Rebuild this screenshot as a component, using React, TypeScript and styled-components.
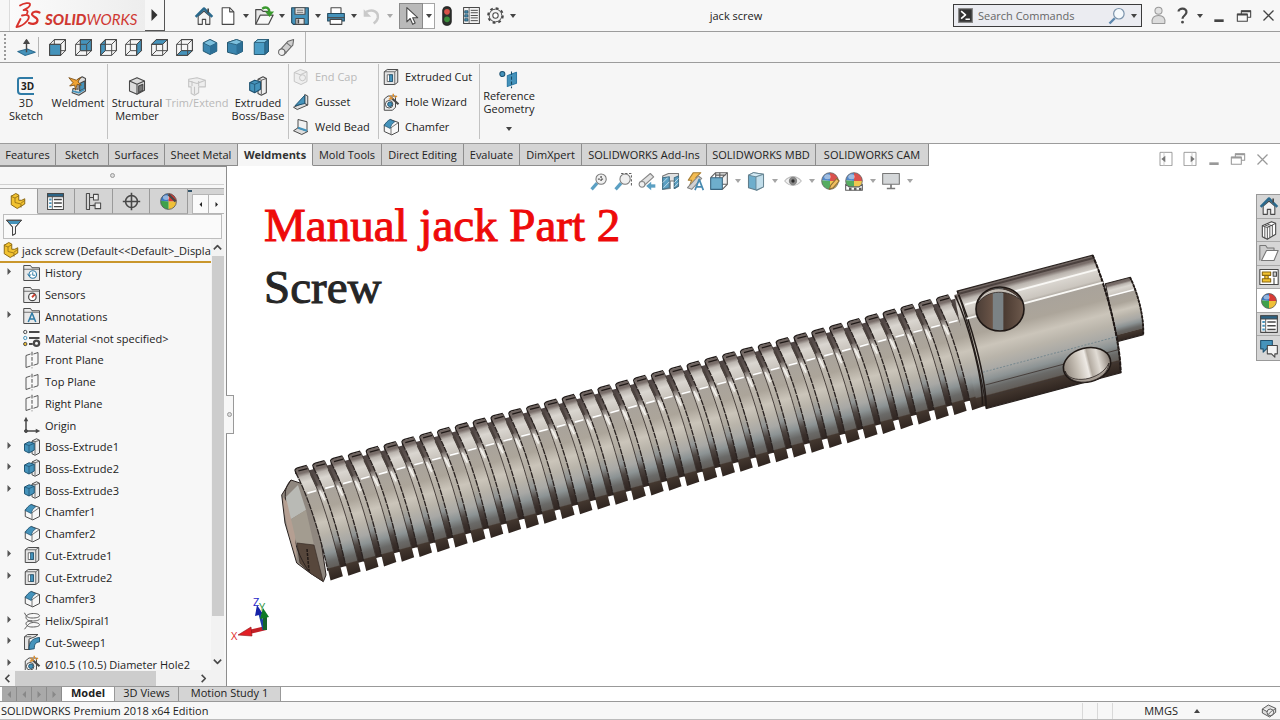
import React from "react";
import styled, { createGlobalStyle, css } from "styled-components";

const ui = `"Open Sans", "Noto Sans", sans-serif`;
const blue = "#4593bb";
const ink = "#484848";

const Global = createGlobalStyle`
  *, *::before, *::after { box-sizing: border-box; }
  html, body { margin: 0; padding: 0; }
  body { background: #fff; color: #222; font: 11px/13px ${ui}; overflow: hidden; }
  button, input { font: inherit; color: inherit; margin: 0; }
  button { border: 0; padding: 0; background: none; cursor: pointer; }
  ul { list-style: none; margin: 0; padding: 0; }
  svg { display: block; flex: none; }
`;

/* ---------- shell ---------- */

const Shell = styled.div`
  display: flex;
  flex-direction: column;
  height: 100vh;
  min-height: 560px;
`;

const TitleBar = styled.header`
  display: flex;
  align-items: center;
  height: 32px;
  background: #f7f7f7;
  border-bottom: 1px solid #9c9c9c;
`;

const Brand = styled.div`
  display: flex;
  align-items: center;
  width: 136px;
  height: 31px;
  margin-left: 9px;
  padding-left: 5px;
  border-left: 1px solid #dcdcdc;
  background: linear-gradient(90deg, #fbfbfb, #ededed);
  color: #cf3832;
`;

const Wordmark = styled.span`
  margin-top: 7px;
  padding-left: 4px;
  font: italic 400 15px/18px Lato, ${ui};
  b { font-weight: 900; }
`;

const BrandArrow = styled.button`
  display: flex;
  align-items: center;
  justify-content: center;
  width: 20px;
  height: 31px;
  border-right: 1px solid #555;
  border-bottom: 1px solid #555;
`;

const QuickTools = styled.div`
  display: flex;
  align-items: center;
  margin-left: 27px;
`;

const IconButton = styled.button<{ $w?: number; $h?: number; $pressed?: boolean }>`
  display: flex;
  flex: none;
  align-items: center;
  justify-content: center;
  width: ${(p) => p.$w ?? 24}px;
  height: ${(p) => p.$h ?? 24}px;
  ${(p) => p.$pressed && css`
    height: 26px;
    margin-left: 3px;
    background: #b9b9b9;
    border: 1px solid #8a8a8a;
  `}
`;

const MenuButton = styled.button<{ $boxed?: boolean; $w?: number }>`
  display: flex;
  flex: none;
  align-items: center;
  justify-content: center;
  width: ${(p) => p.$w ?? 12}px;
  height: 24px;
  ${(p) => p.$boxed && css`
    height: 26px;
    border: 1px solid #a5a5a5;
    border-left: 0;
    background: #fff;
  `}
`;

const DocTitle = styled.h1`
  flex: 1;
  margin: 0;
  text-align: center;
  font: 11px/13px ${ui};
`;

const SearchBox = styled.form`
  display: flex;
  align-items: center;
  width: 189px;
  height: 23px;
  padding: 0 4px;
  gap: 5px;
  border: 1px solid #3c3c3c;
  background: #ebecf1;
  input {
    flex: 1;
    min-width: 0;
    padding: 0;
    border: 0;
    outline: 0;
    background: none;
    &::placeholder { color: #666; opacity: 1; }
  }
`;

const WindowTools = styled.div`
  display: flex;
  align-items: center;
  margin-left: 4px;
`;

const ViewBar = styled.div`
  display: flex;
  align-items: center;
  height: 31px;
  background: #f6f6f6;
  border-bottom: 1px solid #9c9c9c;
`;

const Grip = styled.span`
  width: 1px;
  height: 26px;
  margin: 0 8px 0 4px;
  border-left: 2px dotted #9a9a9a;
`;

const Rule = styled.span<{ $h: number }>`
  flex: none;
  width: 1px;
  height: ${(p) => p.$h}px;
  background: #b5b5b5;
`;

const StatusRule = styled(Rule)`
  background: #d9d9d9;
`;

const ViewGrid = styled.div`
  display: grid;
  grid-template-columns: repeat(10, 1fr);
  justify-items: center;
  width: 254px;
  margin: 0 6px 0 6px;
`;

/* ---------- ribbon ---------- */

const Ribbon = styled.div`
  display: flex;
  height: 81px;
  padding: 1px 0 4px;
  background: #f6f6f6;
  border-bottom: 1px solid #9c9c9c;
`;

const RibbonGroup = styled.div<{ $pad?: string; $w?: number }>`
  display: flex;
  min-width: ${(p) => p.$w ?? 0}px;
  padding: ${(p) => p.$pad ?? "0 4px"};
  border-right: 1px solid #c2c2c2;
  &:last-child { border-right: 0; }
`;

const BigButton = styled.button<{ $w: number; $top?: number; $off?: boolean }>`
  display: flex;
  flex-direction: column;
  align-items: center;
  width: ${(p) => p.$w}px;
  padding-top: ${(p) => p.$top ?? 12}px;
  color: ${(p) => (p.$off ? "#b9b9b9" : "#222")};
  white-space: nowrap;
`;

const MoreMark = styled.span`
  margin-top: 12px;
`;

const SmallColumn = styled.div`
  display: grid;
  grid-template-rows: repeat(3, 1fr);
  width: 100%;
`;

const SmallButton = styled.button<{ $off?: boolean }>`
  display: flex;
  align-items: center;
  gap: 5px;
  color: ${(p) => (p.$off ? "#b9b9b9" : "#222")};
  white-space: nowrap;
`;

const CommandTabs = styled.nav`
  display: flex;
  align-items: flex-start;
  height: 22px;
`;

const CommandTab = styled.button<{ $on?: boolean; $w: number }>`
  min-width: ${(p) => p.$w}px;
  height: 22px;
  border-right: 1px solid #8d8d8d;
  border-bottom: 1px solid #8d8d8d;
  background: #d4d4d4;
  white-space: nowrap;
  ${(p) => p.$on && css`
    background: #f6f6f6;
    border-bottom-color: #f6f6f6;
    font-weight: 700;
    color: #333;
  `}
`;

const DocTools = styled.div`
  display: flex;
  margin: 3px 6px 0 auto;
`;

/* ---------- work area ---------- */

const Work = styled.main`
  display: flex;
  flex: 1;
  min-height: 0;
`;

const Panel = styled.aside`
  display: flex;
  flex: none;
  flex-direction: column;
  width: 227px;
  background: #f7f7f7;
  border-top: 1px solid #8d8d8d;
  border-right: 1px solid #8d8d8d;
`;

const PanelHandle = styled.div`
  display: flex;
  align-items: center;
  justify-content: center;
  height: 18px;
  margin-right: 2px;
  border-bottom: 1px solid #d0d0d0;
`;

const Dot = styled.span`
  width: 5px;
  height: 5px;
  border: 1px solid #999;
  border-radius: 50%;
  background: #ddd;
`;

const PanelTabs = styled.div`
  display: flex;
  height: 26px;
  margin: 3px 2px 0 0;
  border-top: 1px solid #aaa;
  background: #d4d4d4;
`;

const PanelTab = styled.button<{ $on?: boolean }>`
  display: flex;
  flex: 1;
  align-items: center;
  justify-content: center;
  border-right: 1px solid #9a9a9a;
  border-bottom: 1px solid ${(p) => (p.$on ? "#f7f7f7" : "#aaa")};
  background: ${(p) => (p.$on ? "#f7f7f7" : "#d4d4d4")};
`;

const PanelScroll = styled.button`
  display: flex;
  align-items: center;
  justify-content: center;
  width: 16px;
  height: 20px;
  margin-top: 5px;
  border: 1px solid #b5b5b5;
  border-right: 0;
  background: #fafafa;
`;

const TabEdge = styled.span`
  width: 4px;
  height: 3px;
  border-bottom: 2px solid #33556b;
`;

const FilterBox = styled.label`
  display: flex;
  align-items: center;
  height: 25px;
  margin: 0 4px 0 3px;
  padding-left: 1px;
  border: 1px solid #bdbdbd;
  background: #fafafa;
  input {
    flex: 1;
    min-width: 0;
    border: 0;
    outline: 0;
    background: none;
  }
`;

const TreeArea = styled.div`
  display: flex;
  flex: 1;
  min-height: 0;
  margin-right: 2px;
`;

const Tree = styled.div`
  display: flex;
  flex: 1;
  flex-direction: column;
  min-width: 0;
  overflow: hidden;
`;

const TreeRoot = styled.div`
  display: flex;
  flex: none;
  align-items: center;
  height: 24px;
  gap: 2px;
  padding-left: 2px;
  border-bottom: 2px solid #c9962c;
  white-space: nowrap;
`;

const TreeList = styled.ul`
  display: grid;
  flex: 1;
  grid-auto-rows: 1fr;
  && { margin: -1px 0 -5px; }
`;

const TreeItem = styled.li`
  display: flex;
  align-items: center;
  min-height: 20px;
  white-space: nowrap;
`;

const Twisty = styled.button`
  display: flex;
  align-items: center;
  width: 23px;
  height: 12px;
  padding: 0 0 3px 7px;
`;

const Leaf = styled.span`
  width: 23px;
`;

const ItemName = styled.span`
  margin-left: 4px;
`;

const VScroll = styled.div`
  display: flex;
  flex-direction: column;
  align-items: center;
  width: 13px;
  background: #f2f2f2;
`;

const VThumb = styled.div`
  flex: 358;
  width: 12px;
  background: #cdcdcd;
`;

const VTrack = styled.div`
  flex: 37;
`;

const HScroll = styled.div`
  display: flex;
  flex: none;
  align-items: center;
  height: 16px;
  background: #f2f2f2;
`;

const HThumb = styled.div`
  width: 141px;
  height: 15px;
  margin-right: 40px;
  background: #cdcdcd;
`;

const Viewport = styled.section`
  position: relative;
  flex: 1;
  min-width: 0;
  background: #fff;
`;

const Scene = styled.svg`
  position: absolute;
  inset: 0;
  width: 100%;
  height: 100%;
`;

const HeadsUp = styled.div`
  position: relative;
  display: flex;
  align-items: center;
  justify-content: center;
  height: 28px;
  padding: 2px 4px 0 0;
  opacity: 0.88;
`;

const Caption = styled.div`
  position: relative;
  padding: 0 0 0 37px;
`;

const CaptionLine = styled.p<{ $color: string }>`
  margin: 0;
  font: 47px/62px "Liberation Serif", serif;
  color: ${(p) => p.$color};
  -webkit-text-stroke: 1px ${(p) => p.$color};
`;

const Flyout = styled.button`
  position: absolute;
  left: -1px;
  top: 229px;
  display: flex;
  align-items: center;
  justify-content: center;
  width: 8px;
  height: 39px;
  border: 1px solid #999;
  border-left: 0;
  background: #f7f7f7;
`;

const TaskPane = styled.nav`
  position: absolute;
  right: 0;
  top: 28px;
  display: grid;
  grid-template-rows: repeat(7, 1fr);
  width: 24px;
  height: 167px;
  border: 1px solid #999;
  border-right: 0;
`;

const TaskButton = styled.button<{ $on?: boolean }>`
  display: flex;
  align-items: center;
  justify-content: center;
  background: ${(p) => (p.$on ? "#fff" : "#d6d6d6")};
  border-bottom: 1px solid #a8a8a8;
  &:last-child { border-bottom: 0; }
`;

/* ---------- bottom ---------- */

const SheetTabs = styled.nav`
  display: flex;
  flex: none;
  height: 16px;
  padding-left: 2px;
  border-top: 1px solid #999;
  border-bottom: 1px solid #999;
`;

const SheetStep = styled.button`
  display: flex;
  align-items: center;
  justify-content: center;
  width: 15px;
  background: #a9a9a9;
  border-right: 1px solid #8c8c8c;
`;

const SheetTab = styled.button<{ $on?: boolean; $w: number }>`
  min-width: ${(p) => p.$w}px;
  padding-bottom: 2px;
  border-right: 1px solid #999;
  background: ${(p) => (p.$on ? "#fff" : "#d4d4d4")};
  font-weight: ${(p) => (p.$on ? 700 : 400)};
  line-height: 12px;
  white-space: nowrap;
`;

const StatusBar = styled.footer`
  display: flex;
  flex: none;
  align-items: center;
  height: 18px;
  padding: 0 3px 0 1px;
  background: #f7f7f7;
  border-bottom: 1px solid #bbb;
`;

const StatusCells = styled.div`
  display: flex;
  align-items: center;
  gap: 14px;
  margin-left: auto;
`;

const Units = styled.button`
  display: flex;
  align-items: center;
  gap: 16px;
  margin: 0 47px 0 17px;
`;

/* ---------- icons ---------- */

const Icon = ({ s = 18, children }: { s?: number; children: React.ReactNode }) => (
  <svg width={s} height={s} viewBox="0 0 24 24" fill="none" stroke={ink} strokeWidth="1.3" strokeLinejoin="round" aria-hidden="true">
    {children}
  </svg>
);

const Down = ({ c = "#444" }: { c?: string }) => (
  <svg width="6" height="4" viewBox="0 0 6 4" aria-hidden="true"><path d="M0 0h6L3 4z" fill={c} /></svg>
);
const Side = ({ c = "#555", flip, s = 7 }: { c?: string; flip?: boolean; s?: number }) => (
  <svg width={s / 2 + 1} height={s} viewBox="0 0 4 8" aria-hidden="true"><path d={flip ? "M4 0v8L0 4z" : "M0 0v8l4-4z"} fill={c} /></svg>
);

const Logo3DS = () => (
  <svg width="26" height="29" viewBox="0 0 26 29" fill="none" stroke="#d8322c" strokeLinecap="round" strokeLinejoin="round" aria-hidden="true">
    <path d="M5 4.500C8 2.500 16 .5 15 4c-.7 2.500-4 4-6.500 5 4-.7 5 1 3.500 3.500" strokeWidth="1.800" />
    <path d="M7 14.500c7-2 8.500 1 5 5.500-2.500 3-6.500 5.500-10.500 6L5.500 18" strokeWidth="1.900" />
    <path d="M24.500 11.500c-3-1.500-7-1-7.500 1.500-.4 3 6 3 5.500 6.500-.5 3.500-5 4-8.500 2.500" strokeWidth="2.200" />
  </svg>
);

const Home = () => (
  <Icon s={20}>
    <path d="M5 12v10h5v-6h4v6h5V12L12 6z" fill="#f3f3f3" />
    <path d="M2 13 12 3l10 10" stroke="#2b6a8d" strokeWidth="3" />
    <path d="M17 3v5" strokeWidth="2" />
  </Icon>
);
const NewDoc = () => <Icon s={20}><path d="M5 2h9l5 5v15H5z" fill="#fff" /><path d="M14 2v5h5" /></Icon>;
const OpenDoc = () => (
  <Icon s={22}>
    <path d="M3 21V5h6l2 2h6v3" fill="#e8e8e8" /><path d="M3 21 8 11h14l-5 10z" fill="#f8f8f8" />
    <path d="M10 4c5-3 8 0 8 4" stroke="#3a9a2e" strokeWidth="2.600" /><path d="M13 7h10l-5 6z" fill="#3a9a2e" stroke="none" />
  </Icon>
);
const Save = () => (
  <Icon s={20}>
    <path d="M2 2h20v20H4l-2-2z" fill={blue} stroke="#23495e" /><path d="M6 2h12v8H6z" fill="#f4f4f4" /><path d="M8 5h8M8 7.500h8" strokeWidth="1" />
    <path d="M7 15h10v7H7z" fill="#e5e5e5" /><path d="M10 16v5" strokeWidth="2" />
  </Icon>
);
const Print = () => (
  <Icon s={20}>
    <path d="M6 9V2h12v7" fill="#fff" /><path d="M2 9h20v9H2z" fill={blue} stroke="#23495e" /><path d="M2 14h20" /><path d="M5 16h14v6H5z" fill="#fff" />
  </Icon>
);
const Undo = () => <Icon s={20}><path d="M5 7c8-4 15 0 14 7-.5 3-2 5-5 7" stroke="#c9c9c9" strokeWidth="3" /><path d="M2 4v9h9z" fill="#c9c9c9" stroke="none" /></Icon>;
const Cursor = () => <Icon s={20}><path d="M7 2v17l4-4 3 7 3-1.500L14 14h6z" fill="#fff" /></Icon>;
const Light = () => (
  <Icon s={20}>
    <rect x="7" y="1" width="10" height="22" rx="4.500" fill="#2d322d" stroke="#222" /><circle cx="12" cy="7" r="3.400" fill="#d9534a" stroke="none" /><circle cx="12" cy="16" r="3.400" fill="#3b8f3b" stroke="none" />
  </Icon>
);
const Props = ({ s = 19 }: { s?: number }) => (
  <Icon s={s}>
    <path d="M2 2h20v20H2z" fill="#fff" /><path d="M2 2h20v4H2z" fill="#2b6486" /><path d="M8 6v16" strokeWidth="1" />
    <path d="M4 9.500h3M4 14h3M4 18.500h3" stroke={blue} strokeWidth="2.400" /><path d="M10 9.500h10M10 14h10M10 18.500h10" strokeWidth="1.800" />
  </Icon>
);
const Options = () => (
  <Icon s={19}>
    <path d="M2 2h20v20H2z" fill="#f3f3f3" /><path d="M9 2v20" strokeWidth="1" />
    <path d="M3.500 6h4v3h-4zM3.500 11h4v3h-4zM3.500 16h4v3h-4z" fill={blue} stroke="#23495e" strokeWidth="1" /><path d="M11 5.500h9M11 8.500h9M11 12h9M11 15h9M11 18.500h9" strokeWidth="1.200" />
  </Icon>
);
const Gear = () => (
  <Icon s={19}>
    <circle cx="12" cy="12" r="9.300" strokeWidth="2.400" strokeDasharray="3.600 3.700" />
    <circle cx="12" cy="12" r="8" fill="#f3f3f3" strokeWidth="1.200" />
    <circle cx="12" cy="12" r="3.400" fill="#fff" strokeWidth="1.300" />
  </Icon>
);
const Terminal = () => <Icon s={15}><path d="M1 1h22v22H1z" fill="#333" stroke="#888" strokeWidth="2" /><path d="m5 5 7 6-7 6M12 18h7" stroke="#fff" strokeWidth="2.600" /></Icon>;
const Lens = () => <Icon s={18}><path d="m2 22 7-7" stroke="#5b86ad" strokeWidth="3.200" /><circle cx="14.500" cy="9" r="7" fill="#f5f9fc" stroke="#7b93ab" strokeWidth="1.600" /></Icon>;
const User = () => <Icon s={19}><circle cx="12" cy="6" r="4.500" fill="#e2e2e2" stroke="#999" /><path d="M4 22c-1-7 2-10 8-10s9 3 8 10z" fill="#dcdcdc" stroke="#999" /></Icon>;
const Help = () => <Icon s={19}><path d="M7 7C7 2 17.500 2 17 8c0 4-5 4-5 8" strokeWidth="2.800" /><circle cx="12" cy="20.500" r="1.100" fill={ink} /></Icon>;
const Minimize = ({ c = "#444", s = 16 }) => <Icon s={s}><path d="M5 19h14" stroke={c} strokeWidth="4" /></Icon>;
const Restore = ({ c = "#444", s = 16 }) => <Icon s={s}><path d="M8 9V4h14v10h-5" stroke={c} strokeWidth="1.600" /><path d="M2 9h15v11H2z" stroke={c} strokeWidth="1.600" /><path d="M8 5h14M2 10h15" stroke={c} strokeWidth="2.400" /></Icon>;
const Close = ({ c = "#444", s = 15 }) => <Icon s={s}><path d="m4 4 16 16M20 4 4 20" stroke={c} strokeWidth="2" /></Icon>;
const PaneArrow = ({ flip }: { flip?: boolean }) => (
  <Icon s={16}><path d="M3 2h18v20H3z" stroke="#8f8f8f" /><path d={flip ? "M15 2v20" : "M9 2v20"} stroke="#c4c4c4" /><path d={flip ? "M13 7v10l6-5z" : "M11 7v10l-6-5z"} fill="#777" stroke="none" /></Icon>
);

const Normal = () => <Icon s={19}><path d="m1 17 12-3 10 4-13 4z" fill={blue} stroke="#2d6d91" /><path d="M12 18V3" strokeWidth="1.800" /><path d="M8.500 7 12 2l3.500 5z" fill={ink} /></Icon>;
const faces: Record<string, string> = {
  front: "M2 8h14v14H2z", back: "M8 2h14v14H8z", left: "M2 8l6-6v14l-6 6z",
  right: "M16 8l6-6v14l-6 6z", top: "M2 8l6-6h14l-6 6z", bottom: "M2 22l6-6h14l-6 6z",
};
const WireCube = ({ face }: { face: string }) => (
  <Icon s={19}>
    <path d="M8 2h14v14H8zM2 22l6-6" strokeWidth="1.200" />
    <path d={faces[face]} fill={blue} stroke="none" />
    <path d="M2 8h14v14H2zM8 2h14v14M2 8l6-6M16 8l6-6M16 22l6-6" strokeWidth="1.200" />
    <path d={faces[face]} strokeWidth="1.200" />
  </Icon>
);
const IsoCube = () => <Icon s={18}><path d="M12 2 3 6.500v11L12 22l9-4.500v-11z" fill="#3b86af" stroke="#24566f" /><path d="m3 6.500 9 4.500 9-4.500L12 2z" fill="#7cc0de" stroke="#24566f" strokeWidth="1" /><path d="M12 11v11l9-4.500v-11z" fill="#2d7097" stroke="none" /></Icon>;
const TrimetricCube = () => <Icon s={18}><path d="M2 6 14 2l8 3v13l-8 4-12-3z" fill="#3b86af" stroke="#24566f" /><path d="m2 6 12 3 8-4-8-3z" fill="#7cc0de" stroke="#24566f" strokeWidth="1" /><path d="M14 9v13l8-4V5z" fill="#2d7097" stroke="none" /></Icon>;
const DimetricCube = () => <Icon s={18}><path d="M3 6 8 2h14v16l-5 4H3z" fill="#4a9cc5" stroke="#24566f" /><path d="M3 6h14l5-4H8z" fill="#7cc0de" stroke="#24566f" strokeWidth="1" /><path d="M17 6v16l5-4V2z" fill="#2d7097" stroke="#24566f" strokeWidth="1" /></Icon>;
const Scope = () => <Icon s={19}><path d="m3 16 11-12 7-2-1 7L9 21z" fill="#cfcfcf" stroke="#666" /><path d="m6 13 6 6M12 6l6 5" stroke="#777" /><circle cx="6" cy="18" r="4" fill="#eee" stroke="#666" /></Icon>;

const Sketch3D = () => (
  <svg width="20" height="20" viewBox="0 0 20 20" aria-hidden="true">
    <path d="M17 2H4Q2 2 2 4v11q0 3 3 3h13" fill="none" stroke="#2f7ba6" strokeWidth="2" />
    <text x="5" y="14" fontFamily="Open Sans" fontWeight="700" fontSize="10" fill="#222">3D</text>
  </svg>
);
const Weldment = () => <Icon s={20}><path d="M12 4l5-3 4 2v15l-8 5-8-3 1-5 6 1z" fill="#ddd" /><path d="M14 9l6-3v9l-6 3z" fill={blue} /><path d="m5 18 8 2 7-4" stroke={blue} strokeWidth="2" /><path d="m1 2 5 6-4 4 6-1 1 6 2-7 5 1-4-4 3-5-5 3z" fill="#f0a334" stroke="#7a4c12" strokeWidth="1" /></Icon>;
const Member = () => <Icon s={20}><path d="m3 6 9-4 9 4v11l-9 5-9-4z" fill="#ddd" /><path d="m3 6 9 4 9-4M12 10v12" /><path d="m14 12 5-2v7l-5 3z" fill="#777" /></Icon>;
const Trim = () => <Icon s={20}><path d="M2 4 12 2l10 3v8h-8v7l-5 3-4-2v-8H2z" fill="#eee" stroke="#c4c4c4" /><path d="M2 6l10 3 10-4M9 13v9M14 6v6M6 6v6" stroke="#c4c4c4" /></Icon>;
const Extrude = ({ s = 20 }) => (
  <Icon s={s}>
    <path d="m12 4 6-3 4 2v17l-6 3-4-2z" fill="#eee" /><path d="M16 5v17M16 5l6-2M12 4l4 1" strokeWidth="1" />
    <path d="m2 8 6-3 7 2v9l-7 4-6-3z" fill={blue} stroke="#1f5270" /><path d="m2 8 6 2 7-3M8 10v10" stroke="#1f5270" strokeWidth="1" />
  </Icon>
);
const EndCap = () => <Icon><path d="m3 6 8-4 9 3v13l-8 4-9-4z" fill="#eee" stroke="#c4c4c4" /><circle cx="14" cy="13" r="4" stroke="#c4c4c4" /><path d="m3 6 8 3 9-4" stroke="#c4c4c4" /></Icon>;
const Gusset = () => <Icon><path d="m2 19 14-6 5 3-14 6z" fill="#ddd" /><path d="M17 2l4 2v12l-4-2z" fill="#ddd" /><path d="M4 17 17 3v11z" fill={blue} stroke="#1f5270" /></Icon>;
const Bead = () => <Icon><path d="M8 2l12 3v13L8 14z" fill="#f1f1f1" /><path d="m2 17 6-4 13 5-8 4z" fill="#ddd" /><path d="m8 13 12 4" stroke={blue} strokeWidth="3" /></Icon>;
const Cut = () => <Icon><path d="m3 5 4-3h14v17l-4 3H3z" fill="#e4e4e4" /><path d="M3 5h14v17M17 5l4-3" strokeWidth="1" /><path d="M7 9h7v9H7z" fill="#fff" strokeWidth="1" /><path d="M10 9h4v9h-4z" fill={blue} stroke="#1f5270" strokeWidth="1" /></Icon>;
const Wizard = () => <Icon><path d="m3 8 5-4h10v15l-4 4H3z" fill="#eee" /><circle cx="9.500" cy="15" r="5" fill="#fff" /><circle cx="10.500" cy="15" r="3" fill={blue} stroke="#1f5270" /><path d="m12 6 10 9" strokeWidth="3" /><path d="m10 4 4 4M15 1v4M20 4l-3 2M9 8h3" stroke="#e0902c" strokeWidth="2" /></Icon>;
const Chamfer = () => <Icon><path d="m3 9 8-7 11 4v12l-9 4.500L3 18z" fill="#f7f7f7" /><path d="M12 13v9M12 13l10-7" strokeWidth="1" /><path d="M3 10C5 6 8 3 11 2l6 3c-3 2-5 4-6 9z" fill={blue} stroke="#1f5270" strokeWidth="1" /></Icon>;
const RefGeo = () => <Icon s={20}><circle cx="4" cy="6" r="3" fill={blue} stroke="#1f5270" /><path d="m10 8 11-4v13l-11 4z" fill={blue} stroke="#2f7ba6" /><path d="M15 3v20" stroke="#174863" strokeDasharray="4 2" /></Icon>;

const PartIcon = () => <Icon s={18}><path d="m4 5 5-3 4 2v7l4 0 4-2v7l-10 6-8-5V5z" fill="#f2c230" stroke="#8a6710" /><path d="m3 6 5 2v6l8 2v5M8 8l5-3M16 15l5-4" stroke="#8a6710" strokeWidth="1" /></Icon>;
const Config = () => <Icon s={19}><path d="M3 2v20M3 2h4v20H3M7 7h5M7 17h5" /><path d="M12 3h6v7h-6zM14 14h7v7h-7z" fill="#eee" /><path d="M11 17h3" strokeWidth="2" /></Icon>;
const Target = () => <Icon s={19}><circle cx="12" cy="12" r="7.500" strokeWidth="2" /><path d="M12 1v22M1 12h22" strokeWidth="2" /></Icon>;
const Ball = ({ s = 19, extra }: { s?: number; extra?: React.ReactNode }) => (
  <Icon s={s}>
    <g stroke="none">
      <path d="M12 12V2a10 10 0 0 0-10 9z" fill="#3a78c4" /><path d="M12 12V2a10 10 0 0 1 10 10z" fill="#d73a35" />
      <path d="M12 12h10a10 10 0 0 1-10 10z" fill="#efc038" /><path d="M12 12v10a10 10 0 0 1-10-11z" fill="#3fa14b" /><ellipse cx="9" cy="7" rx="4" ry="3" fill="#fff" opacity=".45" />
    </g>
    <circle cx="12" cy="12" r="10" stroke="#555" strokeWidth="1" />
    {extra}
  </Icon>
);
const Funnel = () => <Icon s={18}><path d="M2 3h20l-8 9v9l-4 2V12z" fill="#f4f4f4" /><path d="M3 4h18l-3 4H6z" fill={blue} stroke="none" /><path d="M2 3h20l-8 9v9l-4 2V12z" /></Icon>;
const Folder = ({ children }: { children?: React.ReactNode }) => <Icon><path d="M1 22V2h9l2 3h10v17z" fill="#e9e9e9" /><path d="M1 7h21" strokeWidth="1" />{children}</Icon>;
const History = () => <Folder><circle cx="13" cy="14" r="5" fill="#fff" stroke="#2f7ba6" strokeWidth="1.600" /><path d="M13 11v4h3M6 13l2 3 3-2" stroke="#2f7ba6" /></Folder>;
const Sensors = () => <Folder><circle cx="12.500" cy="14.500" r="5" fill="#fff" strokeWidth="1.600" /><path d="m12 15 4-4" stroke="#d0402f" strokeWidth="2.400" /></Folder>;
const Annot = () => <Folder><path d="m7 20 5-12 5 12M9 16h6" stroke="#2f7ba6" strokeWidth="2" /></Folder>;
const Material = () => <Icon><circle cx="3" cy="4" r="2.200" /><circle cx="3" cy="12" r="2.200" stroke={blue} /><circle cx="3" cy="20" r="2.200" fill="#f2c230" /><path d="M8 4h14M8 12h14M8 20h5" strokeWidth="2.400" /><circle cx="18" cy="19" r="3.500" strokeWidth="3" /></Icon>;
const Plane = () => <Icon><path d="M10 4 4 6v16l6-2M14 19l6-2V2l-6 2" stroke="#555" /><path d="M12 1v22" strokeDasharray="5 2" /></Icon>;
const Origin = () => <Icon><path d="M4 4v16h16" strokeWidth="2" /><path d="M1 7l3-6 3 6zM17 17l6 3-6 3z" fill={ink} stroke="none" /><circle cx="4" cy="20" r="2" fill={ink} /></Icon>;
const Helix = () => <Icon><path d="M2 1c2 5 5 7 10 7 6 0 10-1 10-3s-4-3-8-3C8 2 4 4 4 7s3 5 8 5c6 0 10-1 10-3M4 15c0 3 3 5 8 5 6 0 10-1 10-3s-4-3-8-3c-6 0-8 4-12 9M4 15c0-2 4-3 8-3" strokeWidth="1.200" /></Icon>;
const Sweep = () => <Icon><path d="m2 5 4-3h14l-4 3-8 3v14H2z" fill="#e4e4e4" /><path d="M2 5h9M8 22V10" strokeWidth="1" /><path d="M8 22c0-10 4-15 14-16v6c-5 0-7 3-7 9z" fill={blue} stroke="#1f5270" /></Icon>;

const ZoomFit = ({ dashed }: { dashed?: boolean }) => (
  <Icon s={19}><path d="m2 22 7-8" stroke={blue} strokeWidth="4" />{dashed && <path d="M9 2h13v16" strokeDasharray="3 2" />}<circle cx="14" cy="9" r="6.500" fill="#eee" stroke="#666" />{!dashed && <path d="M14 5v8M10 9h8" strokeWidth="1.800" strokeDasharray="2.500 1.500" />}</Icon>
);
const PrevView = () => <Icon s={20}><path d="M3 14 16 3l4 4L8 18z" fill="#ddd" stroke="#777" /><circle cx="6" cy="16" r="3.500" fill="#eee" stroke="#777" /><path d="M22 18h-6" stroke={blue} strokeWidth="4" /><path d="M11 18l6-5v10z" fill={blue} stroke="none" /></Icon>;
const Section = () => <Icon s={20}><path d="M2 6 9 3h12v15l-5 3v-9h-5v9l-9 1z" fill="#ddd" stroke="#666" /><path d="M2 8l8-1v13l-8 2zM16 8l5-2v12l-5 3z" fill={blue} stroke="#2a5e79" /><path d="m2 14 6-6M3 20l7-7M16 14l5-5M16 19l5-5" stroke="#cfe3ee" strokeWidth="1" /></Icon>;
const Annotate = () => <Icon s={20}><path d="M10 2h9l-6 6h5L5 19l3-8H4z" fill="#f2b33c" stroke="#9b6c17" /><path d="m3 20 13-14 4 3L8 22z" fill="#ccc" stroke="#777" /><path d="m12 23 5-13 5 13M14 19h6" stroke="#2f7ba6" strokeWidth="2" /></Icon>;
const Orient = () => <Icon s={20}><path d="M8 2h14v14H8z" fill="#eee" /><path d="M2 8h14v14H2z" fill="#5ba3c6" stroke="#1f5270" /><path d="M2 8l6-6M16 8l6-6M16 22l6-6M13 2v6M8 5h12" /></Icon>;
const Shaded = () => <Icon s={20}><path d="M3 5 9 2l12 2v15l-8 4-10-3z" fill="#5ba3c6" stroke="#4c6d7d" /><path d="M3 5l9 2 9-3-12-2z" fill="#cfe8f3" stroke="#4c6d7d" strokeWidth="1" /><path d="M12 7v16l9-4V4z" fill="#b9d9e8" stroke="#4c6d7d" strokeWidth="1" /></Icon>;
const Eye = () => <Icon s={20}><path d="M2 12c6-7 14-7 20 0-6 7-14 7-20 0z" fill="#f0f0f0" stroke="#b5b5b5" /><circle cx="12" cy="12" r="5" fill="#777" stroke="none" /><circle cx="12" cy="12" r="2" fill="#111" stroke="none" /></Icon>;
const Monitor = () => <Icon s={20}><path d="M2 3h20v13H2z" fill="#cfd2d4" stroke="#666" /><path d="M12 16v4M7 21h10" strokeWidth="2" stroke="#666" /></Icon>;
const Books = () => <Icon s={20}><path d="m4 7 11-5 5 2v13l-10 6-6-3z" fill="#fff" /><path d="m4 7 6 2 10-5M10 9v14M7 8v14M7 6l6 2M10 5l6 2M13 8v13M16 6v13" strokeWidth="1.100" /></Icon>;
const OpenFolder = () => <Icon s={20}><path d="M1 21V3h7l2 3h8v4" fill="#ccc" stroke="#777" /><path d="M3 21 9 9h14l-5 12z" fill="#fff" stroke="#777" /></Icon>;
const Palette = () => <Icon s={20}><path d="M1 3h22v18H1z" fill="#fff" /><path d="M4 6h10v4H4zM7 10h4v4H7zM4 14h10v4H4z" fill="#f2c230" stroke="#8a6710" /><path d="M17 6h4v5h-4zM18 13v8" fill="#ccc" /></Icon>;
const Chat = () => <Icon s={20}><path d="M2 3h14v10H9l-4 4v-4H2z" fill={blue} stroke="#1f5270" /><path d="M10 9h12v10h-3v4l-4-4h-5z" fill="#f4f4f4" /></Icon>;

/* ---------- model ---------- */

const PITCH = 1844;
const threads = Array.from({ length: 37 }, (_, i) => (i * PITCH) / 100);
const body: [string, string][] = [
  ["0", "#6f6460"], [".05", "#7a6f6b"], [".08", "#bab4ae"], [".13", "#dad6d0"], [".21", "#cbc6bf"], [".24", "#a9a39b"],
  [".38", "#aca59a"], [".5", "#cbc5ba"], [".6", "#b9b4aa"], [".7", "#a8a8a5"], [".77", "#8c9394"], [".84", "#6a6a68"], [".89", "#625e5a"], [".9", "#43372f"], ["1", "#2f2520"],
];
const Stops = ({ list }: { list: [string, string][] }) => <>{list.map(([o, c]) => <stop key={o} offset={o} stopColor={c} />)}</>;

const Model = () => (
  <Scene viewBox="227 166 1053 520" preserveAspectRatio="xMinYMin meet" role="img" aria-label="Jack screw model">
    <defs>
      <linearGradient id="tooth" gradientUnits="userSpaceOnUse" x1="0" y1="-1" x2="0" y2="116"><Stops list={body} /></linearGradient>
      <linearGradient id="head" gradientUnits="userSpaceOnUse" x1="0" y1="-3" x2="0" y2="118"><Stops list={body} /></linearGradient>
      <linearGradient id="stub" gradientUnits="userSpaceOnUse" x1="0" y1="28" x2="0" y2="87"><Stops list={body} /></linearGradient>
      <linearGradient id="core" gradientUnits="userSpaceOnUse" x1="0" y1="3" x2="0" y2="107">
        <Stops list={[["0", "#4b4140"], [".16", "#655b57"], [".26", "#dedad3"], [".36", "#bdb7ad"], [".6", "#b0aa9f"], [".72", "#8f9393"], [".82", "#4f4743"], [".9", "#3a302c"], ["1", "#2e2420"]]} />
      </linearGradient>
      <linearGradient id="bore" x1="0" x2="1" y1="0" y2="0">
        <Stops list={[["0", "#4a3d36"], [".34", "#6a5447"], [".36", "#7b8285"], [".56", "#7b8285"], [".58", "#4a3a31"], ["1", "#6e5a4d"]]} />
      </linearGradient>
      <linearGradient id="bore2" x1="0" x2="1" y1="0" y2="0">
        <Stops list={[["0", "#8f867c"], [".3", "#c9c2b8"], [".5", "#eeeae5"], [".56", "#b3aba1"], [".75", "#e1dcd5"], ["1", "#857b72"]]} />
      </linearGradient>
    </defs>

    <path d="M291 480 281.700 495 285 523 296.700 563 310 573 323.300 581.700 326 575 318 520 303 484z" fill="#8f877f" stroke="#2a2220" />
    <path d="M286 497 298 485 306 510 288 521z" fill="#b9bab5" />
    <path d="M288 521 306 510 314 545 297 543z" fill="#a39c90" />
    <path d="M297 543 314 545 323 581 310 573 300 563z" fill="#57473c" stroke="#3a2e28" strokeWidth=".7" />
    <path d="M307 549l2 22" stroke="#221a17" strokeWidth="1.500" strokeDasharray="3 1" />
    <path d="M291 480C284 488 283 495 290 523S300 558 310 573" fill="none" stroke="#2a2220" />
    <path d="M283 497c1 20 6 40 14 63l-2-24-8-34z" fill="#b59f92" />

    <g transform="translate(295 470) rotate(-14.87)">
      <path d="M4 4H686V106H14C14 60 8 30 4 4z" fill="url(#core)" />
      {threads.map((x) => (
        <g key={x} transform={`translate(${x} 0)`}>
          <path d="M1-1H12.500C18 24 20 60 19 115L6 116C8 60 5 24 0 4z" fill="url(#tooth)" />
          <path d="M12.500-1C18 24 20 60 19 105" fill="none" stroke="#3a322f" strokeWidth=".8" />
          <path d="M0 3C5 24 8 60 6 106" fill="none" stroke="#2a2321" strokeWidth="1.300" strokeDasharray="6 .7" />
          <path d="M0 4V0Q1-1.500 3-1.500H12.500M3 1.800H12.500" fill="none" stroke="#211b19" strokeWidth="1.300" />
          <path d="M14.500 8l2.500 13" stroke="#4a413d" strokeWidth="2.600" />
          <path d="M6 25.500H15" stroke="#fff" strokeWidth="1.600" />
          <path d="M18.500 26l2.500 11" stroke="#f3f1ed" strokeWidth="1.600" />
        </g>
      ))}
      <path d="M682 0H688V117L676 113z" fill="url(#head)" />
      <path d="M831 28H856.500C860 45 860 70 854.500 87H828z" fill="url(#stub)" stroke="#2a2320" strokeWidth="1" />
      <path d="M856.500 28C860 45 860 70 854.500 87" fill="none" stroke="#221b18" strokeWidth="1.800" strokeDasharray="3 1" />
      <path d="M831 41H857" stroke="#fff" strokeWidth="1.500" />
      <path d="M686-3H826C831 30 831 85 823 118H684C688 85 689 30 686-3z" fill="url(#head)" stroke="#2a2320" strokeWidth="1.200" />
      <path d="M826-3C831 30 831 85 823 118" fill="none" stroke="#201917" strokeWidth="2" strokeDasharray="4 1" />
      <path d="M686-3C691 30 692 85 684 118M683 1C688 30 689 85 681 114" fill="none" stroke="#221b18" strokeWidth="1.500" />
      <path d="M686 0H826" stroke="#4b413e" strokeWidth="2" />
      <path d="M690 12H827M688 26H829" stroke="#f9f8f5" strokeWidth="1.800" />
      <path d="M690 82H829" stroke="#78898f" strokeDasharray="2 1.500" />
      <path d="M689 95H828M688 107H826" stroke="#3f3632" strokeWidth=".8" />
    </g>

    <ellipse cx="1000" cy="309" rx="24" ry="22" fill="url(#bore)" stroke="#1f1815" strokeWidth="1.600" />
    <path d="M978 303c4-15 28-22 44-2-14-12-34-12-44 2z" fill="#c4bdb5" stroke="#2a2220" strokeWidth=".8" />
    <ellipse cx="1087" cy="365" rx="24" ry="17" transform="rotate(-14 1087 365)" fill="url(#bore2)" stroke="#1f1815" strokeWidth="1.600" />
    <path d="M1065 371c4 14 36 10 44-8-1 20-38 27-44 8z" fill="#a69d94" stroke="#2a2220" strokeWidth=".8" />

    <g fontFamily="Open Sans" fontSize="11">
      <path d="m266 628-17 4" stroke="#c22026" strokeWidth="4" />
      <path d="m238 635 13-8 1 9z" fill="#e21f26" stroke="#8a1518" strokeWidth=".6" />
      <path d="m264 630-4-16" stroke="#1b3fa5" strokeWidth="3" />
      <path d="m257 605 6 9-8 2z" fill="#1522a8" />
      <path d="m265 630v-14" stroke="#14632a" strokeWidth="4" />
      <path d="m263 608 6 9-9 2z" fill="#0f7a25" />
      <text x="231" y="640" fill="#e02a2a">X</text>
      <text x="253" y="606" fill="#2a2ac8">Z</text>
      <text x="259" y="611" fill="#2f9440">Y</text>
    </g>
  </Scene>
);

/* ---------- data ---------- */

const commandTabs: [string, number][] = [
  ["Features", 56], ["Sketch", 53], ["Surfaces", 56], ["Sheet Metal", 73], ["Weldments", 75], ["Mold Tools", 69],
  ["Direct Editing", 82], ["Evaluate", 56], ["DimXpert", 62], ["SOLIDWORKS Add-Ins", 125], ["SOLIDWORKS MBD", 109], ["SOLIDWORKS CAM", 113],
];

const tree: [string, React.ComponentType, boolean][] = [
  ["History", History, true], ["Sensors", Sensors, false], ["Annotations", Annot, true], ["Material <not specified>", Material, false],
  ["Front Plane", Plane, false], ["Top Plane", Plane, false], ["Right Plane", Plane, false], ["Origin", Origin, false],
  ["Boss-Extrude1", () => <Extrude s={18} />, true], ["Boss-Extrude2", () => <Extrude s={18} />, true], ["Boss-Extrude3", () => <Extrude s={18} />, true],
  ["Chamfer1", Chamfer, false], ["Chamfer2", Chamfer, false], ["Cut-Extrude1", Cut, true], ["Cut-Extrude2", Cut, true],
  ["Chamfer3", Chamfer, false], ["Helix/Spiral1", Helix, true], ["Cut-Sweep1", Sweep, true], ["Ø10.5 (10.5) Diameter Hole2", Wizard, true],
];

const quick: [string, React.ReactNode, boolean][] = [
  ["Home", <Home />, false], ["New", <NewDoc />, true], ["Open", <OpenDoc />, true], ["Save", <Save />, true], ["Print", <Print />, true], ["Undo", <Undo />, true],
];

const headsUp: [string, React.ReactNode, boolean][] = [
  ["Zoom to fit", <ZoomFit />, false], ["Zoom to area", <ZoomFit dashed />, false], ["Previous view", <PrevView />, false], ["Section view", <Section />, false],
  ["Dynamic annotation views", <Annotate />, false], ["View orientation", <Orient />, true], ["Display style", <Shaded />, true], ["Hide or show items", <Eye />, true],
  ["Edit appearance", <Ball s={20} extra={<path d="m11 22 2-5 7-8 3 3-7 8z" fill="#f0b64b" stroke="#7a5a1a" />} />, false],
  ["Apply scene", <Ball s={20} extra={<><path d="M2 16v7h20v-7l-4 3H6z" fill="#fff" /><path d="M6 20h3v3H6zM12 20h3v3h-3zM18 20h3v3h-3z" fill={ink} stroke="none" /></>} />, true], ["View settings", <Monitor />, true],
];

const taskPane: [string, React.ReactNode][] = [
  ["Resources", <Home />], ["Design library", <Books />], ["File explorer", <OpenFolder />], ["View palette", <Palette />],
  ["Appearances", <Ball s={18} />], ["Custom properties", <Props s={20} />], ["Forum", <Chat />],
];

export default function App() {
  return (
    <Shell>
      <Global />
      <TitleBar>
        <Brand><Logo3DS /><Wordmark><b>SOLID</b>WORKS</Wordmark></Brand>
        <BrandArrow aria-label="Show menu"><Side s={12} c="#333" /></BrandArrow>
        <QuickTools>
          {quick.map(([name, icon, menu]) => (
            <React.Fragment key={name}>
              <IconButton aria-label={name}>{icon}</IconButton>
              {menu && <MenuButton aria-label={`${name} menu`}><Down c={name === "Undo" ? "#aaa" : "#444"} /></MenuButton>}
            </React.Fragment>
          ))}
          <IconButton $pressed aria-label="Select"><Cursor /></IconButton>
          <MenuButton $boxed aria-label="Select menu"><Down /></MenuButton>
          <IconButton aria-label="Rebuild"><Light /></IconButton>
          <IconButton aria-label="File properties"><Options /></IconButton>
          <IconButton aria-label="Options"><Gear /></IconButton>
          <MenuButton aria-label="Options menu"><Down /></MenuButton>
        </QuickTools>
        <DocTitle>jack screw</DocTitle>
        <SearchBox onSubmit={(e) => e.preventDefault()}>
          <Terminal />
          <input aria-label="Search Commands" placeholder="Search Commands" />
          <Lens /><Down />
        </SearchBox>
        <WindowTools>
          <IconButton aria-label="Sign in"><User /></IconButton>
          <IconButton aria-label="Help"><Help /></IconButton>
          <MenuButton aria-label="Help menu"><Down /></MenuButton>
          <IconButton $w={26} aria-label="Minimize"><Minimize /></IconButton>
          <IconButton aria-label="Restore"><Restore /></IconButton>
          <IconButton aria-label="Close"><Close /></IconButton>
        </WindowTools>
      </TitleBar>

      <ViewBar>
        <Grip />
        <IconButton aria-label="Normal to"><Normal /></IconButton>
        <Rule $h={20} />
        <ViewGrid>
          {["front", "back", "left", "right", "top", "bottom"].map((f) => <IconButton key={f} aria-label={`${f} view`}><WireCube face={f} /></IconButton>)}
          <IconButton aria-label="Isometric"><IsoCube /></IconButton>
          <IconButton aria-label="Trimetric"><TrimetricCube /></IconButton>
          <IconButton aria-label="Dimetric"><DimetricCube /></IconButton>
          <IconButton aria-label="View selector"><Scope /></IconButton>
        </ViewGrid>
        <Rule $h={30} />
      </ViewBar>

      <Ribbon>
        <RibbonGroup $pad="0 3px 0 0">
          <BigButton $w={52}><Sketch3D /><span>3D<br />Sketch</span></BigButton>
          <BigButton $w={52}><Weldment /><span>Weldment</span></BigButton>
        </RibbonGroup>
        <RibbonGroup $pad="0 0">
          <BigButton $w={58}><Member /><span>Structural<br />Member</span></BigButton>
          <BigButton $w={62} $off disabled><Trim /><span>Trim/Extend</span></BigButton>
          <BigButton $w={60}><Extrude /><span>Extruded<br />Boss/Base</span></BigButton>
        </RibbonGroup>
        <RibbonGroup $pad="0 0 0 3px" $w={90}>
          <SmallColumn>
            <SmallButton $off disabled><EndCap />End Cap</SmallButton>
            <SmallButton><Gusset />Gusset</SmallButton>
            <SmallButton><Bead />Weld Bead</SmallButton>
          </SmallColumn>
        </RibbonGroup>
        <RibbonGroup $pad="0 0 0 3px" $w={101}>
          <SmallColumn>
            <SmallButton><Cut />Extruded Cut</SmallButton>
            <SmallButton><Wizard />Hole Wizard</SmallButton>
            <SmallButton><Chamfer />Chamfer</SmallButton>
          </SmallColumn>
        </RibbonGroup>
        <RibbonGroup>
          <BigButton $w={50} $top={5}><RefGeo /><span>Reference<br />Geometry</span><MoreMark><Down /></MoreMark></BigButton>
        </RibbonGroup>
      </Ribbon>

      <CommandTabs>
        {commandTabs.map(([name, w]) => <CommandTab key={name} $w={w} $on={name === "Weldments"}>{name}</CommandTab>)}
        <DocTools>
          <IconButton aria-label="Collapse left pane"><PaneArrow /></IconButton>
          <IconButton aria-label="Collapse right pane"><PaneArrow flip /></IconButton>
          <IconButton aria-label="Minimize document"><Minimize c="#999" /></IconButton>
          <IconButton aria-label="Restore document"><Restore c="#999" /></IconButton>
          <IconButton aria-label="Close document"><Close c="#999" /></IconButton>
        </DocTools>
      </CommandTabs>

      <Work>
        <Panel>
          <PanelHandle><Dot /></PanelHandle>
          <PanelTabs>
            <PanelTab $on aria-label="Feature tree"><PartIcon /></PanelTab>
            <PanelTab aria-label="Property manager"><Props /></PanelTab>
            <PanelTab aria-label="Configurations"><Config /></PanelTab>
            <PanelTab aria-label="Dimensions"><Target /></PanelTab>
            <PanelTab aria-label="Display manager"><Ball extra={<path d="M12 3 21 12" strokeWidth="3" />} /></PanelTab>
            <TabEdge />
            <PanelScroll aria-label="Scroll tabs left"><Side flip c="#222" s={5} /></PanelScroll>
            <PanelScroll aria-label="Scroll tabs right"><Side c="#222" s={5} /></PanelScroll>
          </PanelTabs>
          <FilterBox><Funnel /><input aria-label="Filter" /></FilterBox>
          <TreeArea>
            <Tree>
              <TreeRoot><PartIcon /><span>{"jack screw (Default<<Default>_Displa"}</span></TreeRoot>
              <TreeList>
                {tree.map(([name, Glyph, open]) => (
                  <TreeItem key={name}>
                    {open ? <Twisty aria-label={`Expand ${name}`}><Side /></Twisty> : <Leaf />}
                    <Glyph /><ItemName>{name}</ItemName>
                  </TreeItem>
                ))}
              </TreeList>
            </Tree>
            <VScroll>
              <IconButton $w={13} $h={17} aria-label="Scroll up"><Icon s={11}><path d="m4 16 8-8 8 8" strokeWidth="3.500" /></Icon></IconButton>
              <VThumb /><VTrack />
              <IconButton $w={13} $h={17} aria-label="Scroll down"><Icon s={11}><path d="m4 8 8 8 8-8" strokeWidth="3.500" /></Icon></IconButton>
            </VScroll>
          </TreeArea>
          <HScroll>
            <IconButton $w={15} $h={16} aria-label="Scroll left"><Icon s={11}><path d="m16 4-8 8 8 8" strokeWidth="3.500" /></Icon></IconButton>
            <HThumb />
            <IconButton $w={15} $h={16} aria-label="Scroll right"><Icon s={11}><path d="m8 4 8 8-8 8" strokeWidth="3.500" /></Icon></IconButton>
          </HScroll>
        </Panel>

        <Viewport>
          <Model />
          <HeadsUp>
            {headsUp.map(([name, icon, menu]) => (
              <React.Fragment key={name}>
                <IconButton aria-label={name}>{icon}</IconButton>
                {menu && <MenuButton $w={13} aria-label={`${name} menu`}><Down c="#999" /></MenuButton>}
              </React.Fragment>
            ))}
          </HeadsUp>
          <Caption>
            <CaptionLine $color="#ee0a0a">Manual jack Part 2</CaptionLine>
            <CaptionLine $color="#262626">Screw</CaptionLine>
          </Caption>
          <Flyout aria-label="Show pane"><Dot /></Flyout>
          <TaskPane>
            {taskPane.map(([name, icon]) => <TaskButton key={name} $on={name === "Appearances"} aria-label={name}>{icon}</TaskButton>)}
          </TaskPane>
        </Viewport>
      </Work>

      <SheetTabs>
        <SheetStep aria-label="First"><Side flip c="#888" /></SheetStep>
        <SheetStep aria-label="Previous"><Side flip c="#888" /></SheetStep>
        <SheetStep aria-label="Next"><Side c="#888" /></SheetStep>
        <SheetStep aria-label="Last"><Side c="#888" /></SheetStep>
        <SheetTab $w={53} $on>Model</SheetTab>
        <SheetTab $w={64}>3D Views</SheetTab>
        <SheetTab $w={102}>Motion Study 1</SheetTab>
      </SheetTabs>
      <StatusBar>
        <span>SOLIDWORKS Premium 2018 x64 Edition</span>
        <StatusCells>
          <StatusRule $h={16} /><StatusRule $h={16} /><StatusRule $h={16} />
          <Units>MMGS<svg width="6" height="4" aria-hidden="true"><path d="M0 4h6L3 0z" fill="#444" /></svg></Units>
          <Icon s={16}><path d="m2 9 9-6 11 5-9 7zM2 9v6l11 6 9-7V8" fill="#ddd" /><circle cx="14" cy="14" r="5" fill="#eee" /><path d="m11 17 6-6" /></Icon>
        </StatusCells>
      </StatusBar>
    </Shell>
  );
}
